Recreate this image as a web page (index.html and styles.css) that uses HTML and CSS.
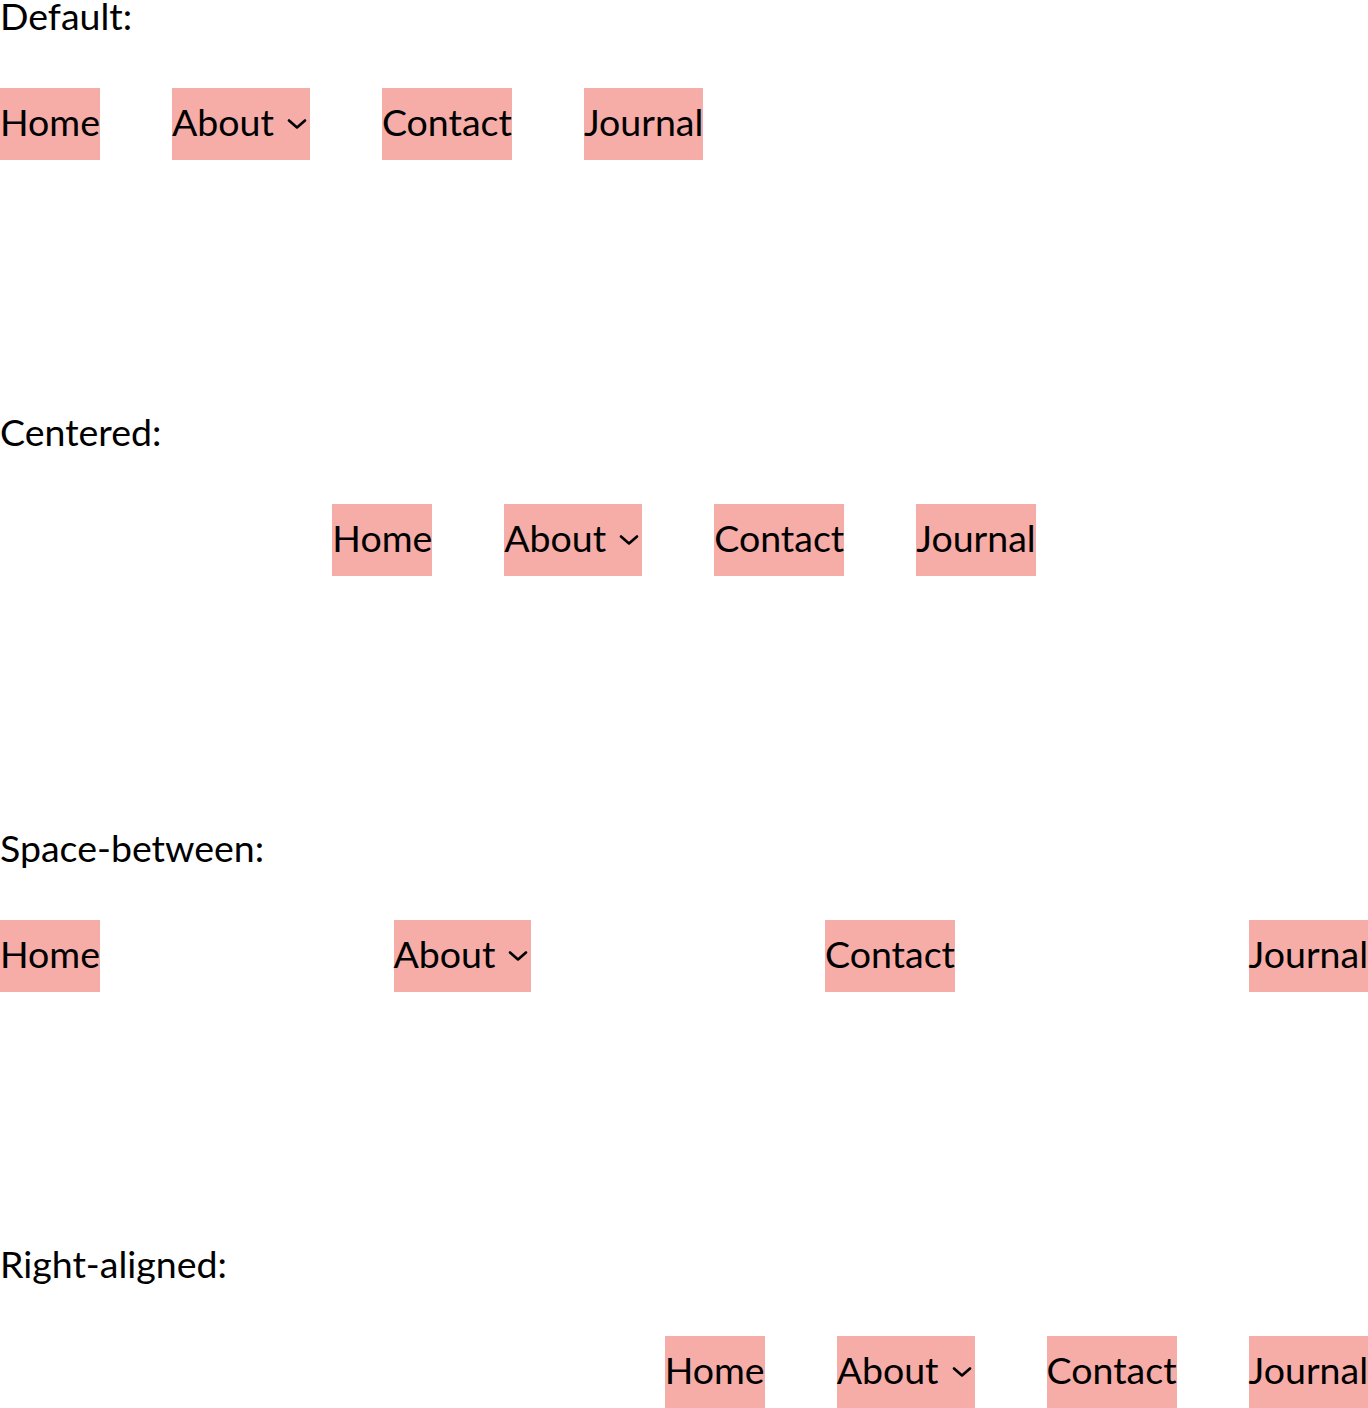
FILE: index.html
```html
<!DOCTYPE html>
<html lang="en">
<head>
  <meta charset="UTF-8" />
  <title>Nav alignment</title>
  <link rel="stylesheet" href="styles.css">
</head>
<body>
  <section class="demo">
    <p class="demo-label">Default:</p>
    <nav class="nav">
      <a class="nav-item" href="#">Home</a>
      <a class="nav-item" href="#">About <svg class="caret" viewBox="0 0 20 10"><path d="M2 1.5 10 8.5l8-7" /></svg></a>
      <a class="nav-item" href="#">Contact</a>
      <a class="nav-item" href="#">Journal</a>
    </nav>
  </section>

  <section class="demo">
    <p class="demo-label">Centered:</p>
    <nav class="nav nav-center">
      <a class="nav-item" href="#">Home</a>
      <a class="nav-item" href="#">About <svg class="caret" viewBox="0 0 20 10"><path d="M2 1.5 10 8.5l8-7" /></svg></a>
      <a class="nav-item" href="#">Contact</a>
      <a class="nav-item" href="#">Journal</a>
    </nav>
  </section>

  <section class="demo">
    <p class="demo-label">Space-between:</p>
    <nav class="nav nav-between">
      <a class="nav-item" href="#">Home</a>
      <a class="nav-item" href="#">About <svg class="caret" viewBox="0 0 20 10"><path d="M2 1.5 10 8.5l8-7" /></svg></a>
      <a class="nav-item" href="#">Contact</a>
      <a class="nav-item" href="#">Journal</a>
    </nav>
  </section>

  <section class="demo">
    <p class="demo-label">Right-aligned:</p>
    <nav class="nav nav-right">
      <a class="nav-item" href="#">Home</a>
      <a class="nav-item" href="#">About <svg class="caret" viewBox="0 0 20 10"><path d="M2 1.5 10 8.5l8-7" /></svg></a>
      <a class="nav-item" href="#">Contact</a>
      <a class="nav-item" href="#">Journal</a>
    </nav>
  </section>
</body>
</html>
```

FILE: styles.css
```css
body {
  margin: 0;
  font-family: Lato, "Open Sans", sans-serif;
  font-size: 37.5px;
  color: #000;
  background: #fff;
}

.demo {
  height: 416px;
}

.demo:last-child {
  height: auto;
}

.demo-label {
  margin: 0;
  padding-top: 2px;
  height: 86px;
  line-height: 28px;
}

.nav {
  display: flex;
  gap: 72px;
}

.nav-center {
  justify-content: center;
}

.nav-between {
  justify-content: space-between;
}

.nav-right {
  justify-content: flex-end;
}

.nav-item {
  display: flex;
  align-items: center;
  gap: 13px;
  box-sizing: border-box;
  height: 72px;
  padding-bottom: 5px;
  background: #f6aca7;
  color: #000;
  text-decoration: none;
}

.caret {
  width: 20px;
  height: 10px;
  margin-top: 5px;
  margin-right: 3px;
  fill: none;
  stroke: #000;
  stroke-width: 2.6;
  stroke-linecap: round;
  stroke-linejoin: round;
}
```
